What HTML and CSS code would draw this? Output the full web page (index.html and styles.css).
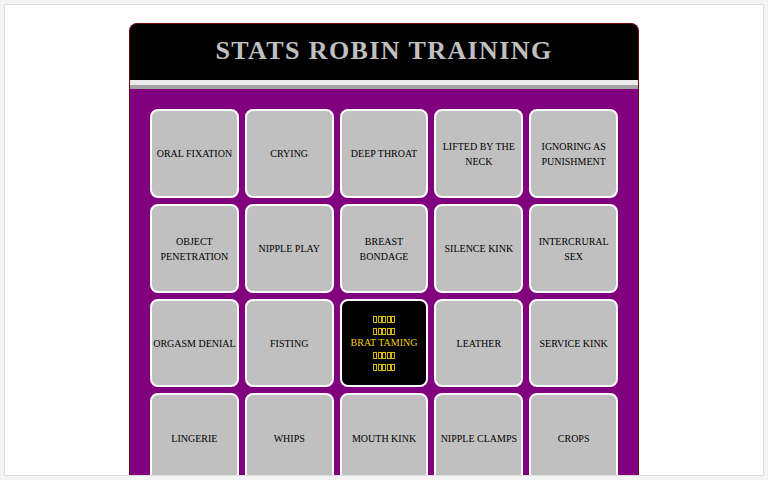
FILE: index.html
```html
<!DOCTYPE html>
<html>
<head>
<meta charset="utf-8">
<link rel="stylesheet" href="styles.css">
</head>
<body>
<div class="frame">
  <div class="card">
    <div class="header"><h1 class="title">STATS ROBIN TRAINING</h1></div>
    <div class="stripe"></div>
    <div class="board">
      <div class="cell">ORAL FIXATION</div>
      <div class="cell">CRYING</div>
      <div class="cell">DEEP THROAT</div>
      <div class="cell">LIFTED BY THE NECK</div>
      <div class="cell">IGNORING AS PUNISHMENT</div>
      <div class="cell">OBJECT PENETRATION</div>
      <div class="cell">NIPPLE PLAY</div>
      <div class="cell">BREAST BONDAGE</div>
      <div class="cell">SILENCE KINK</div>
      <div class="cell">INTERCRURAL SEX</div>
      <div class="cell">ORGASM DENIAL</div>
      <div class="cell">FISTING</div>
      <div class="cell free">
        <div class="free-inner">
          <div class="tofu-row"><i></i><i></i><i></i><i></i><i></i></div>
          <div class="tofu-row"><i></i><i></i><i></i><i></i><i></i></div>
          <div>BRAT TAMING</div>
          <div class="tofu-row"><i></i><i></i><i></i><i></i><i></i></div>
          <div class="tofu-row"><i></i><i></i><i></i><i></i><i></i></div>
        </div>
      </div>
      <div class="cell">LEATHER</div>
      <div class="cell">SERVICE KINK</div>
      <div class="cell">LINGERIE</div>
      <div class="cell">WHIPS</div>
      <div class="cell">MOUTH KINK</div>
      <div class="cell">NIPPLE CLAMPS</div>
      <div class="cell">CROPS</div>
    </div>
  </div>
</div>
</body>
</html>
```
FILE: styles.css
```css
* { box-sizing: border-box; }
html, body { margin: 0; padding: 0; }
body {
  background: #f4f4f4;
  padding: 4px;
  font-family: "Liberation Serif", "Times New Roman", serif;
}
.frame {
  width: 760px;
  height: 472px;
  background: #ffffff;
  border: 1px solid #dedede;
  overflow: hidden;
  padding-top: 18px;
}
.card {
  width: 510px;
  margin: 0 auto;
  border: 1px solid #6e0a0a;
  border-bottom: none;
  border-radius: 8px 8px 0 0;
  overflow: hidden;
  background: #800080;
}
.header {
  background: #000000;
  height: 56px;
  display: flex;
  align-items: center;
  justify-content: center;
  padding-bottom: 2px;
}
.title {
  margin: 0;
  color: #c0c0c0;
  font-size: 26px;
  letter-spacing: 1.4px;
  font-weight: bold;
}
.stripe {
  height: 9px;
  background: linear-gradient(#ebebeb 0, #ebebeb 50%, #a3a3a3 50%, #a3a3a3 100%);
}
.board {
  display: grid;
  grid-template-columns: repeat(5, 1fr);
  gap: 6px;
  padding: 20px;
}
.cell {
  aspect-ratio: 1 / 1;
  background: #c0c0c0;
  border: 2px solid #ffffff;
  border-radius: 8px;
  display: flex;
  align-items: center;
  justify-content: center;
  text-align: center;
  font-size: 10px;
  line-height: 15px;
  color: #000000;
  padding: 1px 1px 0;
}
.free {
  background: #000000;
  color: #f0d000;
  line-height: 12px;
  padding: 0;
}
.tofu-row {
  display: flex;
  justify-content: center;
  gap: 0.5px;
  height: 12px;
  align-items: center;
}
.tofu-row i {
  display: block;
  width: 4px;
  height: 7px;
  border: 1px solid #d8bc00;
}
```
